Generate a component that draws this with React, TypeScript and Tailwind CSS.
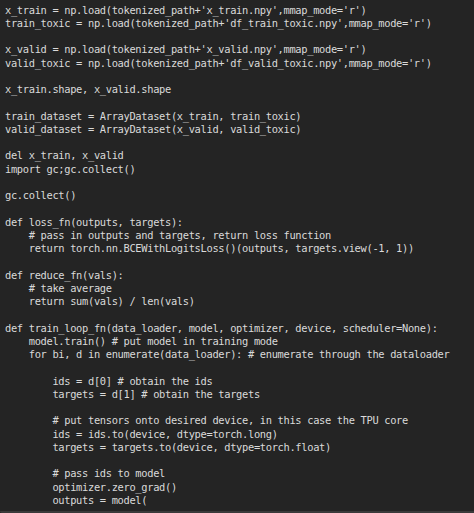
import React from 'react';

const code = `x_train = np.load(tokenized_path+'x_train.npy',mmap_mode='r')
train_toxic = np.load(tokenized_path+'df_train_toxic.npy',mmap_mode='r')

x_valid = np.load(tokenized_path+'x_valid.npy',mmap_mode='r')
valid_toxic = np.load(tokenized_path+'df_valid_toxic.npy',mmap_mode='r')

x_train.shape, x_valid.shape

train_dataset = ArrayDataset(x_train, train_toxic)
valid_dataset = ArrayDataset(x_valid, valid_toxic)

del x_train, x_valid
import gc;gc.collect()

gc.collect()

def loss_fn(outputs, targets):
    # pass in outputs and targets, return loss function
    return torch.nn.BCEWithLogitsLoss()(outputs, targets.view(-1, 1))

def reduce_fn(vals):
    # take average
    return sum(vals) / len(vals)

def train_loop_fn(data_loader, model, optimizer, device, scheduler=None):
    model.train() # put model in training mode
    for bi, d in enumerate(data_loader): # enumerate through the dataloader

        ids = d[0] # obtain the ids
        targets = d[1] # obtain the targets

        # put tensors onto desired device, in this case the TPU core
        ids = ids.to(device, dtype=torch.long)
        targets = targets.to(device, dtype=torch.float)

        # pass ids to model
        optimizer.zero_grad()
        outputs = model(`;

export default function App() {
  return (
    <div className="w-[474px] h-[513px] bg-[#242424] overflow-hidden flex flex-col">
      <pre className="flex-1 m-0 pl-[5px] pt-[3.5px] font-['DejaVu_Sans_Mono',monospace] text-[10.4px] leading-[13.25px] tracking-[-0.33px] text-[#dadada] whitespace-pre">
        {code}
      </pre>
      <div className="h-[2px] bg-[#3a3a3a] rounded-bl-sm" />
    </div>
  );
}
